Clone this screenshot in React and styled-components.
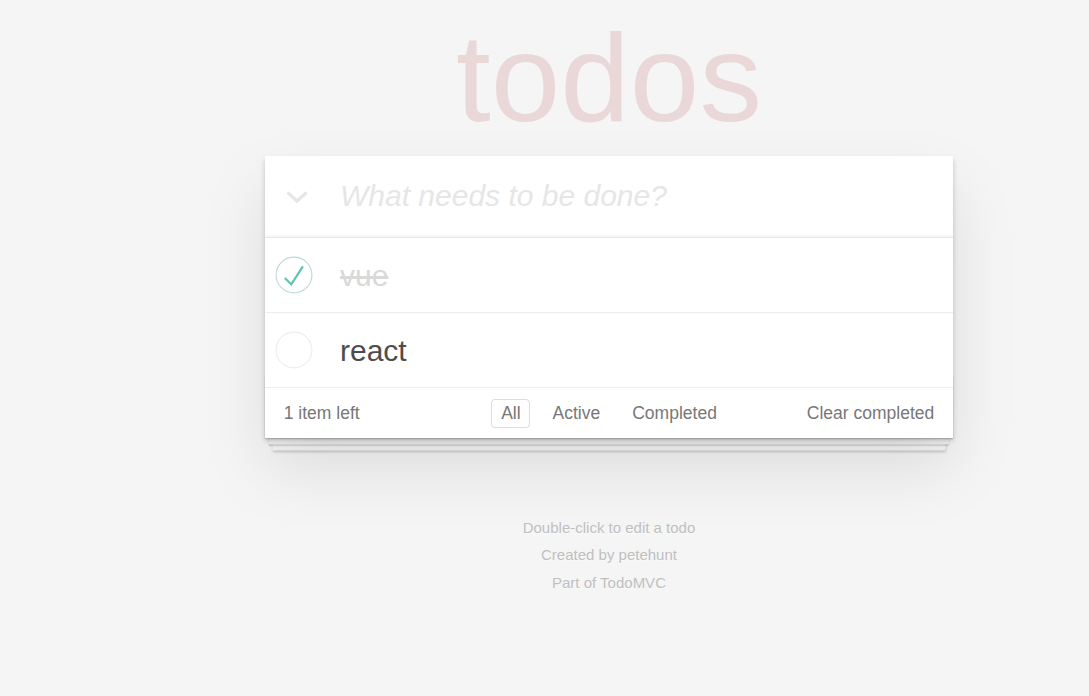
import React, { useState } from "react";
import styled, { createGlobalStyle } from "styled-components";

const GlobalStyle = createGlobalStyle`
  html, body {
    margin: 0;
    padding: 0;
  }
  body {
    background: #f5f5f5;
    color: #4d4d4d;
    font: 17.5px "Liberation Sans", Arial, sans-serif;
    -webkit-font-smoothing: antialiased;
  }
`;

const Page = styled.div`
  width: 688px;
  margin-left: 265px;
  padding-top: 15px;
`;

const Title = styled.h1`
  margin: 0;
  height: 141px;
  font-size: 125px;
  line-height: 125px;
  font-weight: 400;
  text-align: center;
  color: rgba(175, 47, 47, 0.15);
`;

const TodoApp = styled.section`
  position: relative;
  background: #fff;
  box-shadow: 0 2.5px 5px 0 rgba(0, 0, 0, 0.2), 0 31px 62px 0 rgba(0, 0, 0, 0.1);
`;

const Header = styled.header`
  position: relative;
  display: flex;
  align-items: center;
  height: 81px;
  box-shadow: inset 0 -2.5px 1.25px rgba(0, 0, 0, 0.03);
`;

const ToggleAll = styled.button`
  width: 60px;
  height: 81px;
  padding: 0 0 0 4px;
  border: 0;
  background: none;
  display: flex;
  align-items: center;
  justify-content: center;
  cursor: pointer;
`;

const NewTodo = styled.input`
  flex: 1;
  height: 81px;
  margin: 0 0 0 15px;
  padding: 0 20px 2px 0;
  border: 0;
  outline: none;
  background: transparent;
  font: 30px "Liberation Sans", Arial, sans-serif;
  color: #4d4d4d;
  &::placeholder {
    font-style: italic;
    color: #e6e6e6;
  }
`;

const List = styled.ul`
  margin: 0;
  padding: 0;
  list-style: none;
  border-top: 1px solid #e6e6e6;
`;

const Item = styled.li`
  display: flex;
  align-items: center;
  height: 74px;
  border-bottom: 1px solid #ededed;
`;

const Toggle = styled.button`
  width: 38px;
  height: 38px;
  margin: 0 27px 0 10px;
  padding: 0;
  border: 0;
  background: none;
  cursor: pointer;
  svg {
    display: block;
  }
`;

const Label = styled.label`
  font-size: 30px;
  line-height: 36px;
  padding-top: 1px;
  color: ${(p) => (p.$done ? "#d9d9d9" : "#4d4d4d")};
  text-decoration: ${(p) => (p.$done ? "line-through" : "none")};
`;

const Footer = styled.footer`
  position: relative;
  display: grid;
  grid-template-columns: 1fr auto 1fr;
  align-items: center;
  height: 50px;
  padding: 0 18.75px;
  color: #777;
  font-size: 17.5px;
  &::before {
    content: "";
    position: absolute;
    left: 0;
    right: 0;
    bottom: 0;
    height: 62px;
    overflow: hidden;
    z-index: -1;
    box-shadow: 0 1.25px 1.25px rgba(0, 0, 0, 0.2),
      0 10px 0 -3.75px #f6f6f6,
      0 11.25px 1.25px -3.75px rgba(0, 0, 0, 0.2),
      0 20px 0 -7.5px #f6f6f6,
      0 21.25px 2.5px -7.5px rgba(0, 0, 0, 0.2);
  }
`;

const Count = styled.span`
  justify-self: start;
`;

const Filters = styled.ul`
  display: flex;
  gap: 5px;
  margin: 0;
  padding: 0;
  list-style: none;
`;

const FilterLink = styled.a`
  display: block;
  margin: 0 3.75px;
  padding: 4px 8.75px 3.5px;
  line-height: 19.5px;
  border: 1.25px solid ${(p) => (p.$selected ? "rgba(175, 47, 47, 0.2)" : "transparent")};
  border-radius: 3.75px;
  color: inherit;
  text-decoration: none;
  cursor: pointer;
`;

const ClearButton = styled.button`
  justify-self: end;
  padding: 0;
  border: 0;
  background: none;
  color: inherit;
  font: inherit;
  cursor: pointer;
`;

const Info = styled.footer`
  margin-top: 82px;
  color: #bfbfbf;
  font-size: 15px;
  text-align: center;
  text-shadow: 0 1px 0 rgba(255, 255, 255, 0.5);
  p {
    margin: 0 0 12.25px;
    line-height: 1;
  }
`;

const Chevron = () => (
  <svg width="24" height="14" viewBox="0 0 24 14">
    <polyline points="2.5,2.5 12,11 21.5,2.5" fill="none" stroke="#e6e6e6" strokeWidth="3.2" />
  </svg>
);

const CheckCircle = ({ checked }) => (
  <svg width="38" height="38" viewBox="-2 -2 104 104">
    <circle cx="50" cy="50" r="49" fill="none" stroke={checked ? "#bddad5" : "#ededed"} strokeWidth="3" />
    {checked && <path fill="#5dc2af" d="M72 25L42 71 27 56l-4 4 20 20 34-52z" />}
  </svg>
);

export default function App() {
  const [todos, setTodos] = useState([
    { id: 1, title: "vue", done: true },
    { id: 2, title: "react", done: false },
  ]);
  const [filter, setFilter] = useState("All");
  const left = todos.filter((t) => !t.done).length;

  const toggle = (id) =>
    setTodos((list) => list.map((t) => (t.id === id ? { ...t, done: !t.done } : t)));

  return (
    <>
      <GlobalStyle />
      <Page>
        <Title>todos</Title>
        <TodoApp>
          <Header>
            <ToggleAll aria-label="Toggle all">
              <Chevron />
            </ToggleAll>
            <NewTodo placeholder="What needs to be done?" />
          </Header>
          <List>
            {todos.map((t) => (
              <Item key={t.id}>
                <Toggle onClick={() => toggle(t.id)} aria-label="Toggle">
                  <CheckCircle checked={t.done} />
                </Toggle>
                <Label $done={t.done}>{t.title}</Label>
              </Item>
            ))}
          </List>
          <Footer>
            <Count>
              {left} item{left === 1 ? "" : "s"} left
            </Count>
            <Filters>
              {["All", "Active", "Completed"].map((f) => (
                <li key={f}>
                  <FilterLink $selected={filter === f} onClick={() => setFilter(f)}>
                    {f}
                  </FilterLink>
                </li>
              ))}
            </Filters>
            <ClearButton onClick={() => setTodos((list) => list.filter((t) => !t.done))}>
              Clear completed
            </ClearButton>
          </Footer>
        </TodoApp>
        <Info>
          <p>Double-click to edit a todo</p>
          <p>Created by petehunt</p>
          <p>Part of TodoMVC</p>
        </Info>
      </Page>
    </>
  );
}
